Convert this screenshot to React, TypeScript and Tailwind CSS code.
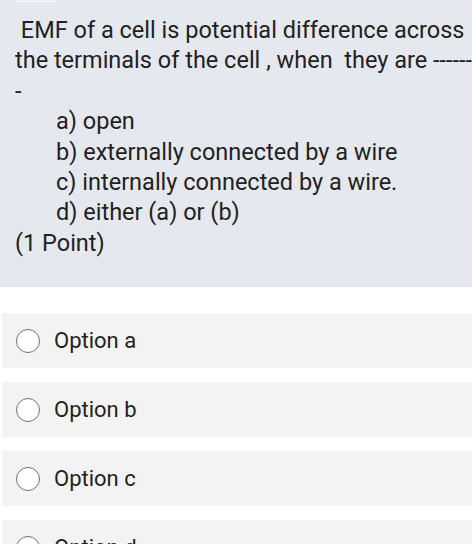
import React from "react";

const options = ["Option a", "Option b", "Option c", "Option d"];

const choices = [
  "a) open",
  "b) externally connected by a wire",
  "c) internally connected by a wire.",
  "d) either (a) or (b)",
];

export default function App() {
  return (
    <div
      className="w-[474px] h-[544px] overflow-hidden bg-white text-[#222222]"
      style={{ fontFamily: "Roboto, 'Noto Sans', sans-serif" }}
    >
      {/* question card */}
      <div className="relative w-[472px] h-[287px] bg-[#e6e8f0] pl-[15px] pt-[15px] text-[23.5px] leading-[30.4px] whitespace-pre overflow-hidden">
        <div className="absolute left-[15px] top-0 h-[2px] w-[41px] bg-[#f1f2f7]" />
        <div>{" EMF of a cell is potential difference across"}</div>
        <div>{"the terminals of the cell , when  they are ------"}</div>
        <div>-</div>
        <div className="pl-[41px]">
          {choices.map((c) => (
            <div key={c}>{c}</div>
          ))}
        </div>
        <div>(1 Point)</div>
      </div>

      {/* answer options */}
      <div className="flex flex-col gap-[14px] pt-[26px] pl-[2px]">
        {options.map((o) => (
          <div
            key={o}
            className="flex items-center h-[55px] w-[470px] bg-[#f3f3f3] pl-[14px]"
          >
            <span className="w-[24px] h-[24px] rounded-full border-[1.5px] border-[#6f6f6f] bg-white shrink-0" />
            <span className="ml-[14px] text-[22px] leading-none">{o}</span>
          </div>
        ))}
      </div>
    </div>
  );
}
